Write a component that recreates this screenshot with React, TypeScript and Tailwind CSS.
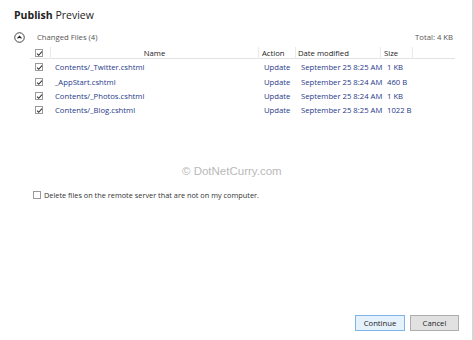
const FONT = { fontFamily: '"Open Sans", "Noto Sans", sans-serif' };

const files = [
  { name: "Contents/_Twitter.cshtml", date: "September 25 8:25 AM", size: "1 KB" },
  { name: "_AppStart.cshtml", date: "September 25 8:24 AM", size: "460 B" },
  { name: "Contents/_Photos.cshtml", date: "September 25 8:24 AM", size: "1 KB" },
  { name: "Contents/_Blog.cshtml", date: "September 25 8:25 AM", size: "1022 B" },
];

const Check = ({ checked = true }: { checked?: boolean }) => (
  <span className="grid h-[8px] w-[8px] place-items-center border border-[#9a9a9a] bg-white">
    {checked && (
      <svg viewBox="0 0 8 8" className="h-[7px] w-[7px]">
        <path d="M1.2 4.2 L3.1 6 L6.8 1.8" fill="none" stroke="#333" strokeWidth="1.2" />
      </svg>
    )}
  </span>
);

const COLS = "grid grid-cols-[21px_208px_37px_85px_32px_42px]";

export default function App() {
  return (
    <div style={FONT} className="relative flex h-[340px] w-[474px] flex-col border-r-2 border-[#d6d6d6] bg-white text-[#222]">
      <div className="pl-[14px] pt-[7px] text-[10.5px] leading-[16px]">
        <span className="font-bold">Publish</span> <span>Preview</span>
      </div>

      <div className="mt-[8px] flex items-center pl-[14px] pr-[19px] text-[7.7px] leading-[12px] text-[#555]">
        <svg viewBox="0 0 12 12" className="h-[11px] w-[11px]">
          <circle cx="6" cy="6" r="5.2" fill="none" stroke="#333" strokeWidth="1" />
          <path d="M3.8 7 L6 4.8 L8.2 7" fill="none" stroke="#222" strokeWidth="1.3" />
        </svg>
        <span className="ml-[12px]">Changed Files (4)</span>
        <span className="ml-auto">Total: 4 KB</span>
      </div>

      <div className="ml-[30px] mt-[4px] w-[425px] text-[7.7px]">
        <div className={`${COLS} h-[12px] items-center border-b border-[#e2e2e2] leading-[12px] text-[#222]`}>
          <span className="flex h-full items-center border-r border-[#eaeaea] pl-[5px]">
            <Check />
          </span>
          <span className="border-r border-[#eaeaea] text-center">Name</span>
          <span className="border-r border-[#eaeaea] pl-[3px]">Action</span>
          <span className="border-r border-[#eaeaea] pl-[2px]">Date modified</span>
          <span className="border-r border-[#eaeaea] pl-[3px]">Size</span>
          <span />
        </div>
        <div className="mt-[1px] flex flex-col text-[#26398a]">
          {files.map((f) => (
            <div key={f.name} className={`${COLS} h-[14.4px] items-center leading-[14px]`}>
              <span className="flex items-center pl-[5px]">
                <Check />
              </span>
              <span className="pl-[4px]">{f.name}</span>
              <span className="pl-[5px]">Update</span>
              <span className="whitespace-nowrap pl-[5px]">{f.date}</span>
              <span className="whitespace-nowrap pl-[6px]">{f.size}</span>
              <span />
            </div>
          ))}
        </div>
      </div>

      <div
        style={{ fontFamily: '"Liberation Sans", Arial, sans-serif' }}
        className="mt-[46px] pl-[182px] text-[11.5px] leading-[14px] text-[#b9b9b9]"
      >
        © DotNetCurry.com
      </div>

      <label className="mt-[12px] flex items-center pl-[33px] text-[7.35px] leading-[10px] text-[#333]">
        <Check checked={false} />
        <span className="ml-[3px]">Delete files on the remote server that are not on my computer.</span>
      </label>

      <div className="mt-auto mb-[9px] flex justify-end gap-[5px] pr-[13px] text-[7.7px]">
        <button className="h-[16px] w-[50px] border border-[#7eb4ea] bg-[#e5f1fb] leading-[14px] text-[#222]">
          Continue
        </button>
        <button className="h-[16px] w-[49px] border border-[#adadad] bg-[#e1e1e1] leading-[14px] text-[#222]">
          Cancel
        </button>
      </div>
    </div>
  );
}
